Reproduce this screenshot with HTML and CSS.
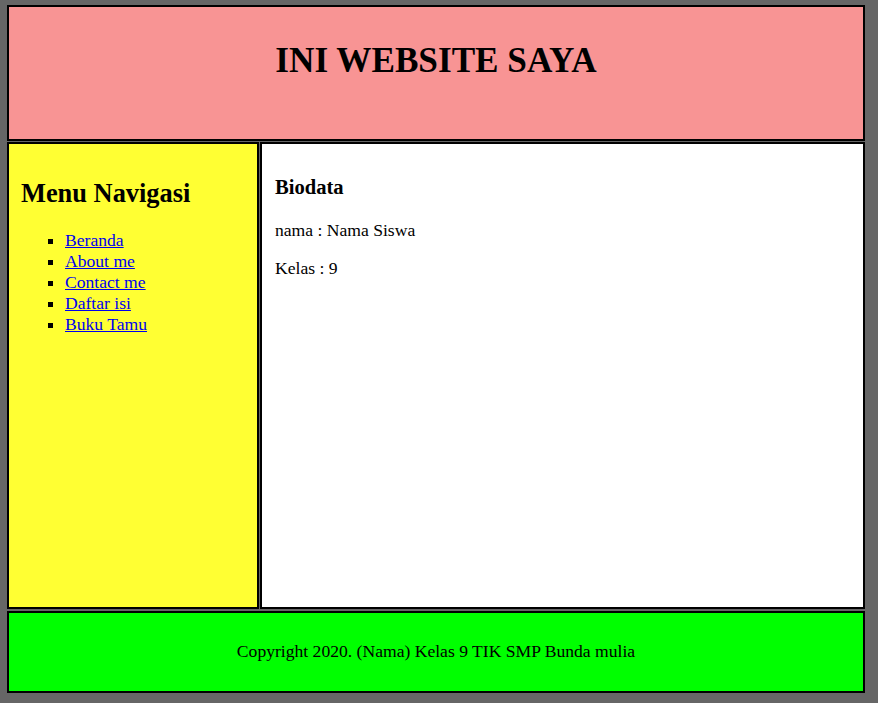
FILE: index.html
```html
<!DOCTYPE html>
<html lang="id">
<head>
<meta charset="utf-8">
<title>INI WEBSITE SAYA</title>
<link rel="stylesheet" href="styles.css">
</head>
<body>
<div class="page">
  <header class="header">
    <h1>INI WEBSITE SAYA</h1>
  </header>
  <div class="main">
    <aside class="sidebar">
      <h2>Menu Navigasi</h2>
      <ul class="menu">
        <li><a href="#">Beranda</a></li>
        <li><a href="#">About me</a></li>
        <li><a href="#">Contact me</a></li>
        <li><a href="#">Daftar isi</a></li>
        <li><a href="#">Buku Tamu</a></li>
      </ul>
    </aside>
    <section class="content">
      <h3>Biodata</h3>
      <p>nama : Nama Siswa</p>
      <p>Kelas : 9</p>
    </section>
  </div>
  <footer class="footer">
    <p>Copyright 2020. (Nama) Kelas 9 TIK SMP Bunda mulia</p>
  </footer>
</div>
</body>
</html>
```
FILE: styles.css
```css
html, body {
  background: #666666;
}
body {
  margin: 0;
  padding: 5px 0 0 7px;
  font-family: "Liberation Serif", "Times New Roman", serif;
  font-size: 17.6px;
  color: #000;
}
.page {
  width: 858px;
}
.header {
  box-sizing: border-box;
  height: 136px;
  border: 2px solid #000;
  background: #f89494;
  text-align: center;
  padding-top: 34px;
}
.header h1 {
  margin: 0;
  font-size: 35.2px;
  line-height: 40px;
  font-weight: bold;
}
.main {
  display: flex;
  gap: 1px;
  margin-top: 1px;
  height: 467px;
}
.sidebar {
  box-sizing: border-box;
  width: 252px;
  flex: none;
  border: 2px solid #000;
  background: #ffff33;
  padding: 12px 12px 0 12px;
}
.sidebar h2 {
  margin: 22px 0;
  font-size: 26.4px;
  line-height: 30px;
}
.menu {
  margin: 0;
  padding-left: 44px;
  list-style-type: square;
}
.menu li {
  line-height: 21px;
}
.menu a {
  color: #0000ee;
  text-decoration: underline;
}
.content {
  box-sizing: border-box;
  flex: 1;
  border: 2px solid #000;
  background: #ffffff;
  padding: 0 12px 0 13px;
}
.content h3 {
  margin: 31px 0 20.6px;
  font-size: 20.6px;
  line-height: 24px;
}
.content p {
  margin: 0 0 17.6px;
  line-height: 21px;
}
.footer {
  box-sizing: border-box;
  height: 82px;
  margin-top: 2px;
  border: 2px solid #000;
  background: #00ff00;
  text-align: center;
  padding-top: 28px;
}
.footer p {
  margin: 0;
  line-height: 21px;
}
```
